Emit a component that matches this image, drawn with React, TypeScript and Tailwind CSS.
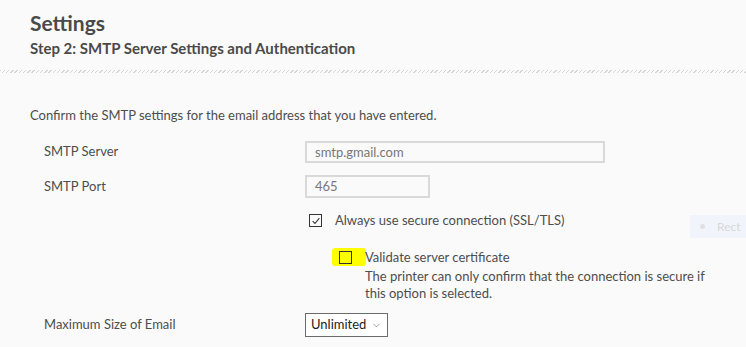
import { ChevronDown } from 'lucide-react';

const font = { fontFamily: 'Lato, "Noto Sans", sans-serif' };

function Row({ label, children }: { label: string; children: React.ReactNode }) {
    return (
        <div className="flex items-center">
            <div className="w-[305px] shrink-0 pl-[44px] text-[13px] text-[#4d4d4d]">{label}</div>
            {children}
        </div>
    );
}

export default function App() {
    return (
        <div className="w-[746px] h-[347px] bg-[#fafafa] overflow-hidden relative" style={font}>
            <div className="px-[30px] pt-[9px] pb-[12px]">
                <h1 className="text-[21px] font-bold text-[#4a4a4a] leading-[27px]">Settings</h1>
                <h2 className="text-[15px] font-bold text-[#4a4a4a] leading-[20px] mt-[2px]">
                    Step 2: SMTP Server Settings and Authentication
                </h2>
            </div>
            <div className="h-[3px] bg-[repeating-linear-gradient(135deg,#d6d6d6_0px,#d6d6d6_1px,transparent_1px,transparent_3px)]" />

            <p className="px-[30px] mt-[33px] text-[13px] text-[#4d4d4d] leading-[18px]">
                Confirm the SMTP settings for the email address that you have entered.
            </p>

            <div className="mt-[17px] flex flex-col gap-[12px]">
                <Row label="SMTP Server">
                    <div className="w-[300px] h-[22px] border-2 border-[#d9d9d9] bg-[#fafafa] px-[8px] text-[13px] text-[#777] leading-[18px]">
                        smtp.gmail.com
                    </div>
                </Row>
                <Row label="SMTP Port">
                    <div className="w-[125px] h-[23px] border-2 border-[#d9d9d9] bg-[#fafafa] px-[8px] text-[13px] text-[#777] leading-[19px]">
                        465
                    </div>
                </Row>
            </div>

            <div className="ml-[309px] mt-[13px] flex items-center gap-[13px]">
                <span className="w-[13px] h-[13px] border border-[#333] flex items-center justify-center">
                    <svg viewBox="0 0 12 12" className="w-[10px] h-[10px]">
                        <path d="M2 6.2 L4.8 9 L10 2.5" fill="none" stroke="#333" strokeWidth="1.3" />
                    </svg>
                </span>
                <span className="text-[13px] text-[#4d4d4d]">Always use secure connection (SSL/TLS)</span>
            </div>

            <div className="ml-[332px] mt-[17px] flex items-center">
                <span className="w-[34px] h-[18px] bg-[#ffff00] rounded-[3px] flex items-center pl-[7px]">
                    <span className="w-[13px] h-[13px] border border-[#333]" />
                </span>
                <span className="-ml-[1px] text-[13px] text-[#4d4d4d]">Validate server certificate</span>
            </div>
            <p className="ml-[365px] mt-[1px] w-[360px] text-[13px] text-[#4d4d4d] leading-[17px]">
                The printer can only confirm that the connection is secure if this option is selected.
            </p>

            <div className="mt-[11px]">
                <Row label="Maximum Size of Email">
                    <div className="w-[83px] h-[24px] border border-[#6b6b6b] bg-white flex items-center justify-between px-[5px] text-[13px] text-[#222]">
                        Unlimited
                        <ChevronDown className="w-[11px] h-[11px] text-[#777]" strokeWidth={1.5} />
                    </div>
                </Row>
            </div>

            <div className="absolute left-[690px] top-[215px] w-[60px] h-[23px] bg-[#f1f5fb] flex items-center gap-[12px] pl-[10px] text-[12px] text-[#d8d8d8]">
                <span className="w-[5px] h-[5px] rounded-full bg-[#e0e0e0]" />
                Rect
            </div>
        </div>
    );
}
